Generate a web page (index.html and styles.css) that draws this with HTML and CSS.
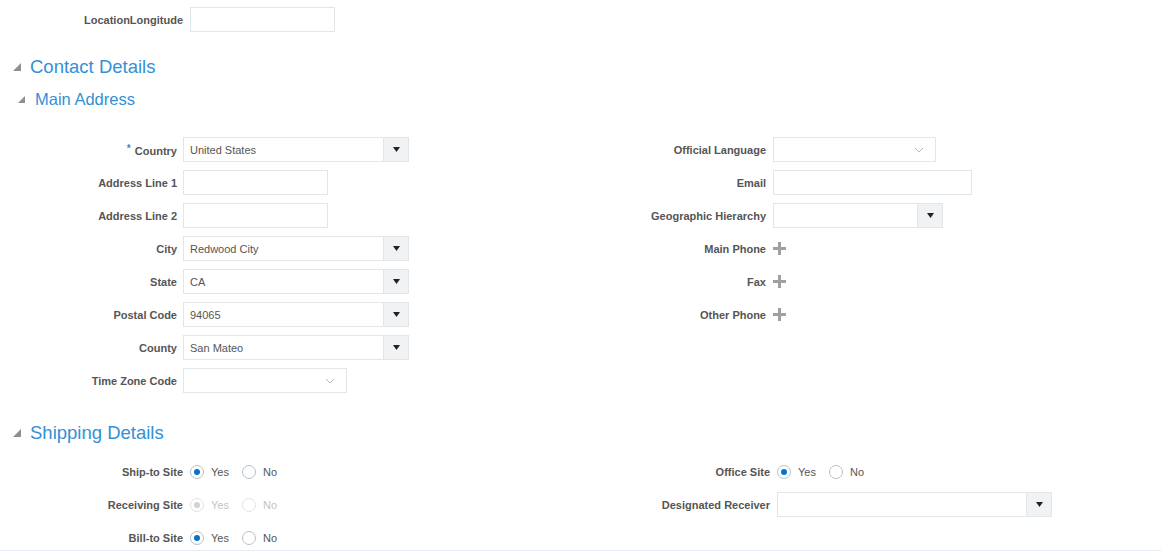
FILE: index.html
```html
<!DOCTYPE html>
<html>
<head>
<meta charset="utf-8">
<title>Location Details</title>
<link rel="stylesheet" href="styles.css">
</head>
<body>
<div class="page">
  <div class="row top-row">
    <span class="lbl lbl-top">LocationLongitude</span>
    <div class="input w145"></div>
  </div>

  <h2 class="heading h-contact"><svg class="tri" width="8" height="8" viewBox="0 0 8 8"><polygon points="8,0 8,8 0,8"/></svg>Contact Details</h2>
  <h3 class="heading h-main"><svg class="tri" width="7" height="7" viewBox="0 0 7 7"><polygon points="7,0 7,7 0,7"/></svg>Main Address</h3>

  <div class="cols cols-main">
    <div class="col col-left">
      <div class="row"><span class="lbl"><span class="req">*</span> Country</span><div class="input combo w226"><span class="val">United States</span><span class="btn"><svg width="7" height="5" viewBox="0 0 7 5"><polygon points="0,0 7,0 3.5,5"/></svg></span></div></div>
      <div class="row"><span class="lbl">Address Line 1</span><div class="input w145"></div></div>
      <div class="row"><span class="lbl">Address Line 2</span><div class="input w145"></div></div>
      <div class="row"><span class="lbl">City</span><div class="input combo w226"><span class="val">Redwood City</span><span class="btn"><svg width="7" height="5" viewBox="0 0 7 5"><polygon points="0,0 7,0 3.5,5"/></svg></span></div></div>
      <div class="row"><span class="lbl">State</span><div class="input combo w226"><span class="val">CA</span><span class="btn"><svg width="7" height="5" viewBox="0 0 7 5"><polygon points="0,0 7,0 3.5,5"/></svg></span></div></div>
      <div class="row"><span class="lbl">Postal Code</span><div class="input combo w226"><span class="val">94065</span><span class="btn"><svg width="7" height="5" viewBox="0 0 7 5"><polygon points="0,0 7,0 3.5,5"/></svg></span></div></div>
      <div class="row"><span class="lbl">County</span><div class="input combo w226"><span class="val">San Mateo</span><span class="btn"><svg width="7" height="5" viewBox="0 0 7 5"><polygon points="0,0 7,0 3.5,5"/></svg></span></div></div>
      <div class="row"><span class="lbl">Time Zone Code</span><div class="input select w164"><span class="val"></span><svg class="chev" width="10" height="6" viewBox="0 0 10 6"><polyline points="1,1 5,5 9,1"/></svg></div></div>
    </div>
    <div class="col col-right">
      <div class="row"><span class="lbl">Official Language</span><div class="input select w163"><span class="val"></span><svg class="chev" width="10" height="6" viewBox="0 0 10 6"><polyline points="1,1 5,5 9,1"/></svg></div></div>
      <div class="row"><span class="lbl">Email</span><div class="input w199"></div></div>
      <div class="row"><span class="lbl">Geographic Hierarchy</span><div class="input combo w170"><span class="val"></span><span class="btn"><svg width="7" height="5" viewBox="0 0 7 5"><polygon points="0,0 7,0 3.5,5"/></svg></span></div></div>
      <div class="row"><span class="lbl">Main Phone</span><svg class="plus" width="13" height="13" viewBox="0 0 13 13"><rect x="5" y="0" width="3" height="13"/><rect x="0" y="5" width="13" height="3"/></svg></div>
      <div class="row"><span class="lbl">Fax</span><svg class="plus" width="13" height="13" viewBox="0 0 13 13"><rect x="5" y="0" width="3" height="13"/><rect x="0" y="5" width="13" height="3"/></svg></div>
      <div class="row"><span class="lbl">Other Phone</span><svg class="plus" width="13" height="13" viewBox="0 0 13 13"><rect x="5" y="0" width="3" height="13"/><rect x="0" y="5" width="13" height="3"/></svg></div>
    </div>
  </div>

  <h2 class="heading h-ship"><svg class="tri" width="8" height="8" viewBox="0 0 8 8"><polygon points="8,0 8,8 0,8"/></svg>Shipping Details</h2>

  <div class="cols cols-ship">
    <div class="col col-left">
      <div class="row"><span class="lbl">Ship-to Site</span><span class="radio checked"></span><span class="rtext">Yes</span><span class="radio"></span><span class="rtext">No</span></div>
      <div class="row disabled"><span class="lbl">Receiving Site</span><span class="radio checked"></span><span class="rtext">Yes</span><span class="radio"></span><span class="rtext">No</span></div>
      <div class="row"><span class="lbl">Bill-to Site</span><span class="radio checked"></span><span class="rtext">Yes</span><span class="radio"></span><span class="rtext">No</span></div>
    </div>
    <div class="col col-right">
      <div class="row"><span class="lbl">Office Site</span><span class="radio checked"></span><span class="rtext">Yes</span><span class="radio"></span><span class="rtext">No</span></div>
      <div class="row"><span class="lbl">Designated Receiver</span><div class="input combo w275"><span class="val"></span><span class="btn"><svg width="7" height="5" viewBox="0 0 7 5"><polygon points="0,0 7,0 3.5,5"/></svg></span></div></div>
    </div>
  </div>
</div>
</body>
</html>
```
FILE: styles.css
```css
html, body {
  margin: 0;
  padding: 0;
  background: #ffffff;
}
body {
  font-family: "Liberation Sans", Arial, sans-serif;
  font-size: 11px;
  color: #333;
}
.page {
  width: 1161px;
  height: 555px;
  overflow: hidden;
}
.row {
  display: flex;
  align-items: center;
  height: 25px;
}
.row + .row {
  margin-top: 8px;
}
.lbl {
  flex: none;
  text-align: right;
  font-weight: bold;
  font-size: 11px;
  color: #555555;
  white-space: nowrap;
}
.req {
  color: #2d8cd3;
  font-size: 10px;
  vertical-align: 3px;
  margin-right: 1px;
}
.top-row {
  margin-top: 7px;
}
.lbl-top {
  width: 183px;
  margin-right: 7px;
}
.heading {
  display: flex;
  align-items: center;
  margin: 0;
  font-weight: normal;
  color: #3390d6;
}
.tri {
  flex: none;
  fill: #8f8f8f;
}
.h-contact {
  margin-top: 24px;
  padding-left: 13px;
  font-size: 18.5px;
  line-height: 22px;
}
.h-contact .tri, .h-ship .tri {
  margin-right: 9px;
}
.h-main {
  margin-top: 11px;
  padding-left: 18px;
  font-size: 16.5px;
  line-height: 20px;
}
.h-main .tri {
  margin-right: 10px;
}
.h-ship {
  margin-top: 29px;
  padding-left: 13px;
  font-size: 18.5px;
  line-height: 22px;
}
.cols {
  display: grid;
  grid-template-columns: 620px 1fr;
}
.cols-main {
  margin-top: 28px;
}
.cols-main .col-left .lbl {
  width: 177px;
  margin-right: 6px;
}
.cols-main .col-right .lbl {
  width: 146px;
  margin-right: 7px;
}
.cols-ship {
  margin-top: 15px;
  border-bottom: 1px solid #e4edf5;
}
.cols-ship .col-left .lbl {
  width: 183px;
  margin-right: 7px;
}
.cols-ship .col-right .lbl {
  width: 150px;
  margin-right: 7px;
}
.input {
  box-sizing: border-box;
  height: 25px;
  border: 1px solid #e1e6ea;
  background: #fff;
  display: flex;
  align-items: center;
  flex: none;
}
.w145 { width: 145px; }
.w226 { width: 226px; }
.w164 { width: 164px; }
.w163 { width: 163px; }
.w199 { width: 199px; }
.w170 { width: 170px; }
.w275 { width: 275px; }
.val {
  flex: 1;
  padding-left: 6px;
  color: #555555;
  font-size: 11px;
  white-space: nowrap;
}
.btn {
  flex: none;
  align-self: stretch;
  width: 24px;
  background: #f0f2f4;
  border-left: 1px solid #e1e6ea;
  display: flex;
  align-items: center;
  justify-content: center;
}
.btn svg {
  fill: #222222;
}
.chev {
  flex: none;
  margin-right: 11px;
  fill: none;
  stroke: #b3bcc4;
  stroke-width: 1;
}
.plus {
  flex: none;
  fill: #a0a0a0;
}
.radio {
  box-sizing: border-box;
  flex: none;
  width: 14px;
  height: 14px;
  border-radius: 50%;
  border: 1px solid #b8c0c7;
  background: #fff;
  display: flex;
  align-items: center;
  justify-content: center;
}
.radio.checked::after {
  content: "";
  width: 6px;
  height: 6px;
  border-radius: 50%;
  background: #0572ce;
}
.rtext {
  margin-left: 7px;
  margin-right: 13px;
  font-size: 11px;
  color: #555555;
}
.disabled .radio {
  border-color: #e0e4e7;
}
.disabled .radio.checked::after {
  background: #d2d2d2;
}
.disabled .rtext {
  color: #c4c4c4;
}
```
